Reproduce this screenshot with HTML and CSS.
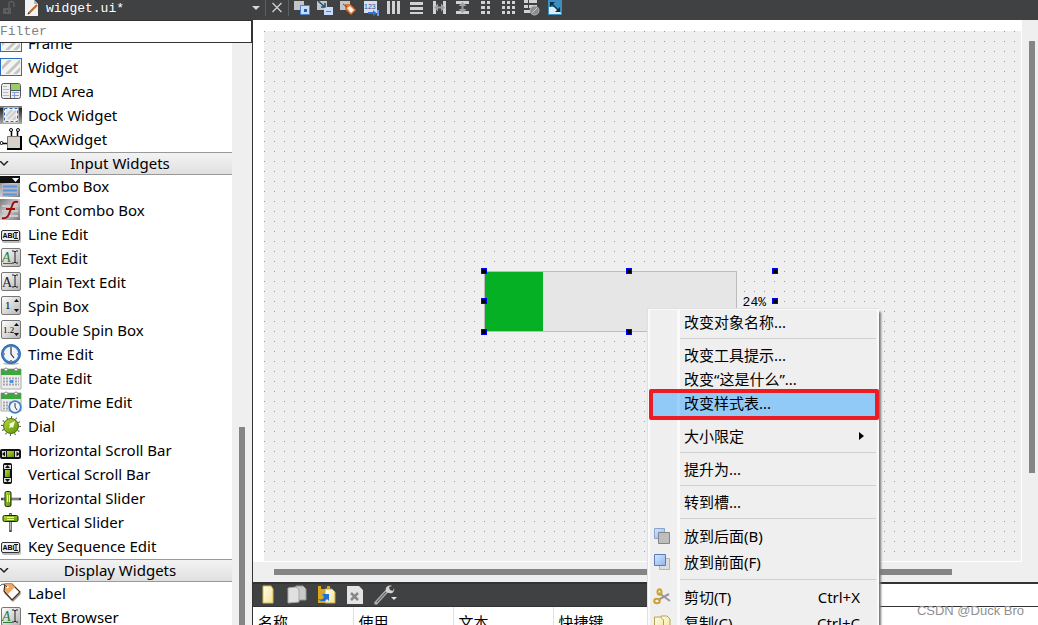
FILE: index.html
```html
<!DOCTYPE html>
<html lang="zh-CN">
<head>
  <meta charset="UTF-8">
  <meta name="viewport" content="width=device-width, initial-scale=1.0">
  <title>widget.ui - Designer</title>
  <link rel="stylesheet" href="styles.css">
</head>
<body>
  <!-- shared gradients and icons -->
  <svg class="defs" width="0" height="0" aria-hidden="true">
    <defs>
      <linearGradient id="grey" x1="0" y1="0" x2="1" y2="1"><stop offset="0" stop-color="#fff"/><stop offset="1" stop-color="#b4b4b4"/></linearGradient>
      <linearGradient id="dark" x1="0" y1="0" x2="0" y2="1"><stop offset="0" stop-color="#111"/><stop offset="1" stop-color="#aaa"/></linearGradient>
      <linearGradient id="steel" x1="0" y1="0" x2="1" y2="1"><stop offset="0" stop-color="#777"/><stop offset=".5" stop-color="#ccc"/><stop offset="1" stop-color="#777"/></linearGradient>
      <linearGradient id="green" x1="0" y1="0" x2="1" y2="1"><stop offset="0" stop-color="#b4dc3c"/><stop offset="1" stop-color="#5f8f08"/></linearGradient>
      <linearGradient id="sky" x1="0" y1="0" x2="1" y2="1"><stop offset="0" stop-color="#d4e6ff"/><stop offset="1" stop-color="#8fb6ee"/></linearGradient>
      <linearGradient id="paper" x1="0" y1="0" x2="1" y2="1"><stop offset="0" stop-color="#fffef0"/><stop offset="1" stop-color="#f3e391"/></linearGradient>
      <symbol id="i-frame" viewBox="0 0 22 24">
        <rect x=".5" y="2.5" width="21" height="17" fill="#f4f4f2" stroke="#2a6cc0"/>
        <path d="M2 10l6-6h4L2 14zM5 18L19 4h1v3L9 18zM13 18l7-7v4l-3 3z" fill="#c4c4c2"/>
      </symbol>
      <symbol id="i-abi" viewBox="0 0 22 24">
        <rect x="2" y="8" width="19" height="12" rx="2" fill="#bbb"/>
        <rect x="1.500" y="7.500" width="18" height="10" rx="1.500" fill="#eee" stroke="#333"/>
        <text x="2.500" y="15" class="abi">ABI</text>
        <path d="M14 9.500h4M14 15.500h4M16 9v7" stroke="#111"/>
      </symbol>
      <symbol id="i-text" viewBox="0 0 22 24">
        <rect x="1.500" y="1.500" width="19" height="18" rx="1.500" fill="url(#grey)" stroke="#777"/>
        <text x="2" y="15" class="ai ai-green">A</text>
        <path d="M3 16.500h9" stroke="#2b7c34"/>
        <path d="M12 4h2l1 1 1-1h2M12 16h2l1-1 1 1h2M15 5v10" stroke="#222" fill="none"/>
      </symbol>
    </defs>
  </svg>

  <header class="topbar">
    <svg class="lock" width="14" height="18" viewBox="0 0 14 18"><path d="M2 8h8v6H2z" fill="#5c5d5e"/><path d="M8 8V4a2.500 2.500 0 0 1 5 0v3" fill="none" stroke="#5c5d5e" stroke-width="1.500"/><path d="M5.500 10h1v2h-1z" fill="#333"/></svg>
    <svg width="16" height="18" viewBox="0 0 16 18"><path d="M1 0h9l4 4v12H1z" fill="#f2f2f2"/><path d="M10 0v4h4z" fill="#b9b9b9"/><path d="M5 13l8-8" stroke="#bf6a28" stroke-width="2.200"/><path d="M3.500 14.500l2.500-.8-1.600-1.600z" fill="#333"/></svg>
    <select class="doc" aria-label="Open documents"><option>widget.ui*</option></select>
    <svg class="drop" width="8" height="18" viewBox="0 0 8 18"><path d="M0 6h8L4 10z" fill="#d8d8d8"/></svg>
    <button class="close" aria-label="Close"><svg width="22" height="18" viewBox="0 0 22 18"><path d="M6.500 4l9 9M15.500 4l-9 9" stroke="#d0d0d0" stroke-width="1.300"/></svg></button>
    <nav class="tools">
      <button aria-label="Edit Widgets"><svg width="16" height="16"><path d="M0 1h10v9H0z" fill="#c5c5c5"/><path d="M6.500 5.500h9v9h-9z" fill="#c7dcfa" stroke="#4f7fcf"/><path d="M10 9h3v3h-3z" fill="#1f5dbb"/></svg></button>
      <button aria-label="Edit Signals"><svg width="16" height="16"><path d="M0 1h10v9H0z" fill="#c5c5c5"/><path d="M7 7h9v8H7z" fill="#c7dcfa"/><path d="M9 11.500h5" stroke="#4f7fcf"/><path d="M1 1l7 6M8 3v4H4" fill="none" stroke="#244f78" stroke-width="1.500"/></svg></button>
      <button aria-label="Edit Buddies"><svg width="16" height="16"><path d="M0 1h10v9H0z" fill="#c5c5c5"/><path d="M5 4h5l6 6-5 5-6-6z" fill="#e8712e"/><path d="M7 8l3-2 4 4-3 3z" fill="#fff4e8"/><path d="M3 4l4 3" stroke="#7d3f24"/></svg></button>
      <button aria-label="Edit Tab Order"><svg width="16" height="16"><path d="M1 1h13v12H1z" fill="#d7dfea"/><text x="1" y="9" class="num">123</text><path d="M5 12h5v-2l4 3.500-4 2.500v-2H5z" fill="#3272cf"/><path d="M15 10v6" stroke="#5b9bf0" stroke-width="2"/></svg></button>
      <button aria-label="Lay Out Horizontally"><svg width="16" height="16"><path d="M1 1h3v13H1zM6 1h3v13H6zM11 1h3v13h-3z" fill="#d2d2d2"/></svg></button>
      <button aria-label="Lay Out Vertically"><svg width="16" height="16"><path d="M1 2h13v3H1zM1 7h13v3H1zM1 12h13v2H1z" fill="#d2d2d2"/></svg></button>
      <button aria-label="Horizontal Splitter"><svg width="16" height="16"><path d="M1 1h3v13H1zM11 1h3v13h-3z" fill="#d2d2d2"/><path d="M2 7.500l4-4v3h3v-3l4 4-4 4v-3H6v3z" fill="#a0a0a0"/></svg></button>
      <button aria-label="Vertical Splitter"><svg width="16" height="16"><path d="M1 1h13v3H1zM1 11h13v3H1z" fill="#d2d2d2"/><path d="M7.500 2l4 4h-3v3h3l-4 4-4-4h3V6h-3z" fill="#a0a0a0"/></svg></button>
      <button aria-label="Form Layout"><svg width="16" height="16"><path d="M3 1h4v3H3zM9 1h3v3H9zM3 6h4v3H3zM9 6h3v3H9zM3 11h4v3H3zM9 11h3v3H9z" fill="#d2d2d2"/></svg></button>
      <button aria-label="Grid Layout"><svg width="16" height="16"><path d="M1 1h3v3H1zM6 1h3v3H6zM11 1h3v3h-3zM1 6h3v3H1zM6 6h3v3H6zM11 6h3v3h-3zM1 11h3v3H1zM6 11h3v3H6zM11 11h3v3h-3z" fill="#d2d2d2"/></svg></button>
      <button aria-label="Break Layout"><svg width="16" height="16"><path d="M0 0h4v3H0zM5 0h8v3H5zM0 5h4v3H0zM5 5h8v3H5zM0 10h6v3H0z" fill="#d2d2d2"/><circle cx="10.500" cy="10.500" r="4.500" fill="#8c8c8c" stroke="#b5b5b5"/><path d="M8 13l5-5" stroke="#ccc"/></svg></button>
      <button aria-label="Adjust Size"><svg width="16" height="16"><path d="M1 0h14v15H1z" fill="#3c8ec0"/><path d="M2 7h6l6 6v1H2z" fill="#dcecf5"/><path d="M4 3l8 8" stroke="#06344e" stroke-width="1.500"/><path d="M3 2h5L3 7zM13 12H8l5-5z" fill="#06344e"/></svg></button>
    </nav>
  </header>

  <main class="designer">
    <aside class="widgetbox">
      <input class="filter" type="text" placeholder="Filter" aria-label="Filter">
      <div class="box-scroll">
        <div class="box-list">
          <ul class="widgets">
            <li><svg class="icon"><use href="#i-frame"/></svg>Frame</li>
            <li><svg class="icon"><use href="#i-frame"/></svg>Widget</li>
            <li><svg class="icon" viewBox="0 0 22 24"><rect x="1.500" y="3.500" width="19" height="15" rx="2" fill="#eee" stroke="#555"/><path d="M11 4h9v6h-9z" fill="#9ccb6a"/><path d="M10.500 4v14M11 10.500h9" stroke="#555"/><path d="M3 6.500h4M3 9.500h6M3 12.500h5M3 15.500h6" stroke="#bbb"/><path d="M12 12.500h7M12 15.500h7M14.500 12v6" stroke="#7fa2df"/></svg>MDI Area</li>
            <li><svg class="icon" viewBox="0 0 22 24"><path d="M0 2h22v18H0z" fill="url(#dark)"/><path d="M0 2h22v2H0z" fill="#777"/><rect x="4.500" y="4.500" width="13" height="13" fill="#e6e6e6" stroke="#fff" stroke-width="2"/><rect x="4.500" y="4.500" width="13" height="13" fill="none" stroke="#2a6cc0" stroke-dasharray="3 2"/><path d="M6 12l6-6M8 15l8-8M13 16l3-3" stroke="#c8c8c8" stroke-width="1.500"/></svg>Dock Widget</li>
            <li><svg class="icon" viewBox="0 0 22 24"><path d="M11.500 3v6M17.500 3v6M3 15.500h5" stroke="#000" stroke-width="1.500"/><circle cx="11" cy="2" r="1.500" fill="#fff" stroke="#000"/><circle cx="18" cy="2" r="1.500" fill="#fff" stroke="#000"/><circle cx="1.500" cy="15" r="1.500" fill="#fff" stroke="#000"/><path d="M7 8h14v13H7z" fill="#d5d1ca"/><path d="M7.500 21V8.500H21" stroke="#777" fill="none"/><path d="M7 21h14V8" fill="none" stroke="#000" stroke-width="2"/></svg>QAxWidget</li>
          </ul>
          <h2 class="group"><svg class="chev" width="10" height="6"><path d="M1 0l4 4 4-4" fill="none" stroke="#222" stroke-width="1.500"/></svg>Input Widgets</h2>
          <ul class="widgets">
            <li><svg class="icon" viewBox="0 0 22 24"><path d="M0 1h20v21H0z" fill="url(#steel)"/><path d="M0 1h20v7H0z" fill="#111"/><path d="M12 3h7l-3.500 4z" fill="#fff"/><path d="M2 9h16v12H2z" fill="#b4b8be"/><path d="M3 11.500h14M3 15.500h14M3 19.500h14" stroke="#5b93d8" stroke-width="2"/></svg>Combo Box</li>
            <li><svg class="icon" viewBox="0 0 22 24"><path d="M0 0h20v21H0z" fill="url(#steel)"/><path d="M2 7h16M2 12h16M2 17h16" stroke="#ccc" stroke-width="2"/><path d="M18 3c-3-1-5 0-6 4l-3 8c-1 3-4 5-7 4M6 10h9" stroke="#a00d0d" stroke-width="2" fill="none"/></svg>Font Combo Box</li>
            <li><svg class="icon"><use href="#i-abi"/></svg>Line Edit</li>
            <li><svg class="icon"><use href="#i-text"/></svg>Text Edit</li>
            <li><svg class="icon" viewBox="0 0 22 24"><rect x="1.500" y="1.500" width="19" height="18" rx="1.500" fill="url(#grey)" stroke="#777"/><text x="2" y="16" class="ai">A</text><path d="M12 4h2l1 1 1-1h2M12 16h2l1-1 1 1h2M15 5v10" stroke="#222" fill="none"/></svg>Plain Text Edit</li>
            <li><svg class="icon" viewBox="0 0 22 24"><rect x="1.500" y="1.500" width="19" height="18" rx="1.500" fill="url(#grey)" stroke="#777"/><text x="5" y="14" class="digit">1</text><path d="M14 7h5l-2.500-3zM14 14h5l-2.500 3z" fill="#111"/></svg>Spin Box</li>
            <li><svg class="icon" viewBox="0 0 22 24"><rect x="1.500" y="1.500" width="19" height="18" rx="1.500" fill="url(#grey)" stroke="#777"/><text x="3" y="14" class="digit small">1.2</text><path d="M14 7h5l-2.500-3zM14 14h5l-2.500 3z" fill="#111"/></svg>Double Spin Box</li>
            <li><svg class="icon" viewBox="0 0 22 24"><ellipse cx="11" cy="20.500" rx="8" ry="1.500" fill="#bbb"/><circle cx="11" cy="11" r="8.500" fill="#f2f6fb" stroke="#3f7fc8" stroke-width="2.500"/><circle cx="11" cy="11" r="9.500" fill="none" stroke="#20508e" stroke-width=".7"/><path d="M11 5v6l3 4M11 4v1M4 11h1M17 11h1M11 17v1" fill="none" stroke="#333" stroke-width="1.200"/></svg>Time Edit</li>
            <li><svg class="icon" viewBox="0 0 22 24"><path d="M1 2h20v20H1z" fill="#ededed" stroke="#aaa"/><path d="M1 2h20v6H1z" fill="#3da63d"/><path d="M3 11.500h16M3 14.500h16M3 17.500h16" stroke="#a5a5b0" stroke-width="2" stroke-dasharray="2 1"/><path d="M10 13h3v3h-3z" fill="#4d8fe0"/><circle cx="6" cy="2.500" r="1.500" fill="#fff" stroke="#888"/><circle cx="16" cy="2.500" r="1.500" fill="#fff" stroke="#888"/></svg>Date Edit</li>
            <li><svg class="icon" viewBox="0 0 22 24"><path d="M1 2h20v18H1z" fill="#ededed" stroke="#aaa"/><path d="M1 2h20v6H1z" fill="#3da63d"/><path d="M3 11.500h8M3 14.500h6M3 17.500h6" stroke="#a5a5b0" stroke-width="2" stroke-dasharray="2 1"/><circle cx="6" cy="2.500" r="1.500" fill="#fff" stroke="#888"/><circle cx="16" cy="2.500" r="1.500" fill="#fff" stroke="#888"/><circle cx="15" cy="16" r="5.800" fill="#f2f6fb" stroke="#3f7fc8" stroke-width="1.800"/><path d="M15 12v4l2 3" fill="none" stroke="#333"/></svg>Date/Time Edit</li>
            <li><svg class="icon" viewBox="0 0 22 24"><circle cx="11" cy="11" r="9" fill="none" stroke="#555" stroke-width="2" stroke-dasharray="1 3.700"/><circle cx="11" cy="11" r="7.500" fill="url(#green)" stroke="#48700a"/><path d="M15 6l-6 3 1 1-1 3 3-1 1 1z" fill="#f8ffe0"/></svg>Dial</li>
            <li><svg class="icon" viewBox="0 0 22 24"><rect x="0" y="10" width="21" height="10" rx="2" fill="#111"/><path d="M2 12h17v6H2z" fill="#ddd"/><path d="M6 11h9v8H6z" fill="#111"/><path d="M7 12h7v6H7z" fill="url(#green)"/><path d="M5 12.500v5L2 15zM16.500 12.500v5l3-2.500z" fill="#111"/></svg>Horizontal Scroll Bar</li>
            <li><svg class="icon" viewBox="0 0 22 24"><rect x="3" y="0" width="9" height="21" rx="2" fill="#111"/><path d="M4 2h7v17H4z" fill="#ddd"/><path d="M4 6h7v9H4z" fill="#111"/><path d="M5 7h5v7H5z" fill="url(#green)"/><path d="M5 5h5L7.500 2zM5 16h5l-2.500 3z" fill="#111"/></svg>Vertical Scroll Bar</li>
            <li><svg class="icon" viewBox="0 0 22 24"><path d="M1 12h20" stroke="#444" stroke-width="2.500"/><path d="M3 12h16" stroke="#bbb"/><rect x="5" y="4.500" width="6" height="15" rx="1.500" fill="url(#green)" stroke="#1c2604"/><path d="M7.500 8v7M9.500 8v7" stroke="#e8ffa0"/></svg>Horizontal Slider</li>
            <li><svg class="icon" viewBox="0 0 22 24"><path d="M10.500 2v19" stroke="#444" stroke-width="2.500"/><path d="M10.500 3v16" stroke="#bbb"/><rect x="3" y="4.500" width="15" height="6" rx="1.500" fill="url(#green)" stroke="#1c2604"/><path d="M7 6.500h7M7 8.500h7" stroke="#e8ffa0"/></svg>Vertical Slider</li>
            <li><svg class="icon"><use href="#i-abi"/></svg>Key Sequence Edit</li>
          </ul>
          <h2 class="group"><svg class="chev" width="10" height="6"><path d="M1 0l4 4 4-4" fill="none" stroke="#222" stroke-width="1.500"/></svg>Display Widgets</h2>
          <ul class="widgets">
            <li><svg class="icon" viewBox="0 0 22 24"><path d="M6 3h7l8 9-8 8-9-9z" fill="#999"/><path d="M5 2h7l8 8-8 8-8-9z" fill="#fff" stroke="#4a2c14" stroke-width="1.200"/><path d="M5 2h7l3 3-7 7-3-3z" fill="#f0a860"/><circle cx="7.500" cy="5" r="1.200" fill="#fff"/><path d="M7 5C3 0 1 3 0 4" fill="none" stroke="#333"/></svg>Label</li>
            <li><svg class="icon"><use href="#i-text"/></svg>Text Browser</li>
          </ul>
        </div>
        <div class="box-bar"><div class="box-thumb"></div></div>
      </div>
    </aside>

    <section class="work">
      <div class="view">
        <div class="canvas">
          <div class="form">
            <div class="selected">
              <progress class="bar" value="23" max="100" id="progressBar"></progress>
              <label class="percent" for="progressBar">24%</label>
              <i class="grip nw"></i><i class="grip n"></i><i class="grip ne"></i>
              <i class="grip w"></i><i class="grip e"></i>
              <i class="grip sw"></i><i class="grip s"></i>
            </div>
          </div>
        </div>
        <div class="vbar"><div class="vthumb"></div></div>
      </div>
      <div class="hbar"><div class="hthumb"></div></div>

      <div class="actions">
        <div class="actionbar">
          <button aria-label="New"><svg width="20" height="20"><path d="M5 1h8l2 3v14H5z" fill="url(#paper)" stroke="#d8ba50"/></svg></button>
          <button aria-label="Copy"><svg width="20" height="20"><path d="M9 1h7l3 3v11H9z" fill="#c9c9c9" stroke="#999"/><path d="M1 3l8-1 3 3v12l-11 1z" fill="#e0e0e0" stroke="#aaa"/></svg></button>
          <button aria-label="Paste"><svg width="20" height="20"><path d="M2 1h12v17H2z" fill="#dba820"/><path d="M5 0h6v4H5z" fill="#444"/><path d="M9 4h7l3 3v11H9z" fill="url(#paper)" stroke="#c9a244"/><path d="M2 14c4 1 5 0 6-2L6 9h7v7l-2-2c-2 3-6 3-9 0z" fill="#1d71db"/></svg></button>
          <button aria-label="Delete"><svg width="20" height="20"><path d="M2 1h12l4 4v14H2z" fill="#e4e4e4"/><path d="M6 8l7 7M13 8l-7 7" stroke="#888" stroke-width="2.500"/></svg></button>
          <button aria-label="Configure"><svg width="26" height="20"><path d="M2 18L12 7" stroke="#aaa" stroke-width="3.500" stroke-linecap="round"/><path d="M3 17L12 7" stroke="#505152"/><path d="M18 1l-3 1 1 3 3 1 1-3c1 4-2 6-5 5-3 0-4-3-3-5s3-3 6-2z" fill="#d4d4d4"/><path d="M17 12h6l-3 3z" fill="#e6e6e6"/></svg></button>
        </div>
        <input class="action-filter" type="text" aria-label="Filter actions">
      </div>
      <table class="action-table">
        <thead><tr><th>名称</th><th>使用</th><th>文本</th><th>快捷键</th><th></th></tr></thead>
      </table>
    </section>

    <div class="menu" role="menu">
      <button class="item">改变对象名称...</button>
      <hr>
      <button class="item">改变工具提示...</button>
      <button class="item">改变“这是什么”...</button>
      <button class="item active">改变样式表...</button>
      <hr>
      <button class="item">大小限定<svg class="arrow" width="5" height="8"><path d="M0 0l5 4-5 4z"/></svg></button>
      <hr>
      <button class="item">提升为...</button>
      <hr>
      <button class="item">转到槽...</button>
      <hr>
      <button class="item tall"><svg class="glyph" width="18" height="18"><path d="M1.500 1.500h10v10h-10z" fill="url(#sky)" stroke="#8ba3cc"/><path d="M5.500 5.500h11v11h-11z" fill="#bebebe" stroke="#858585"/></svg>放到后面(B)</button>
      <button class="item tall"><svg class="glyph" width="18" height="18"><path d="M6.500 5.500h10v11h-10z" fill="#ddd" stroke="#b5b5b5"/><path d="M1.500 1.500h11v11h-11z" fill="url(#sky)" stroke="#5c7cae"/></svg>放到前面(F)</button>
      <hr>
      <button class="item tall"><svg class="glyph" width="18" height="18"><path d="M6 5l11 8M5 12l11-6" stroke="#999" stroke-width="2"/><ellipse cx="6.500" cy="4" rx="2" ry="2.800" fill="none" stroke="#d0a030" stroke-width="2"/><ellipse cx="4" cy="13" rx="2.800" ry="2.200" fill="none" stroke="#d0a030" stroke-width="2"/></svg>剪切(T)<span class="key">Ctrl+X</span></button>
      <button class="item tall"><svg class="glyph" width="18" height="18"><path d="M8 2h6l3 3v10H8z" fill="url(#paper)" stroke="#b9a24f"/><path d="M1.500 3h6l3 3v11h-9z" fill="url(#paper)" stroke="#b9a24f"/></svg>复制(C)<span class="key">Ctrl+C</span></button>
    </div>
    <span class="mark">CSDN @Duck Bro</span>
  </main>
</body>
</html>
```
FILE: styles.css
```css
*{margin: 0; padding: 0; box-sizing: border-box;}
body{
  height: 100vh;
  display: flex; flex-direction: column;
  overflow: hidden;
  background: #fff; color: #000;
  font: 15px/22px "Noto Sans", "Noto Sans CJK SC", sans-serif;
}
button, input, select{font: inherit; color: inherit; border: 0; background: none; outline: 0;}
button{display: flex; align-items: center;}
ul{list-style: none;}
.defs{position: absolute;}

/* top toolbar */
.topbar{
  flex: none; height: 20px;
  display: flex; align-items: flex-start;
  background: #404142;
}
.lock{margin: 0 9px 0 1px;}
.doc{
  appearance: none;
  width: 212px; height: 18px; padding-left: 6px;
  color: #fff;
  font: 13px/18px "Liberation Mono", monospace;
}
.drop{margin-right: 5px;}
.close{border: solid #5e5f60; border-width: 0 1px; height: 16px;}
.tools{display: flex; gap: 7px; padding-left: 5px;}
.num{font: 7px "Liberation Sans", sans-serif; fill: #22569c;}

.designer{flex: 1; min-height: 0; display: flex; position: relative;}

/* widget box */
.widgetbox{
  flex: none; width: 253px;
  display: flex; flex-direction: column;
  border-right: 1px solid #333;
}
.filter{
  width: 100%; height: 23px;
  border: solid #333; border-width: 1px 1px 1px 0;
  font: 13px/20px "Liberation Mono", monospace;
}
.filter::placeholder{color: #808080;}
.box-scroll{flex: 1; min-height: 0; display: flex; overflow: hidden;}
/* list is scrolled down so the Frame row is cut */
.box-list{flex: 1; margin-top: -11px;}
.widgets li{display: flex; gap: 6px; height: 24px; white-space: nowrap;}
.icon{width: 22px; height: 24px; flex: none;}
.abi{font: bold 7px "Liberation Sans", sans-serif;}
.ai{font: 14px "Liberation Serif", serif; fill: #222;}
.ai-green{font-style: italic; fill: #2b7c34;}
.digit{font: 11px "Liberation Serif", serif;}
.small{font-size: 9px;}
.group{
  position: relative;
  height: 23px; padding-left: 8px;
  border: solid #999; border-width: 1px 0;
  background: linear-gradient(#f3f3f3, #e0e0e0);
  font-size: 15px; line-height: 20px; font-weight: normal;
  text-align: center;
}
.chev{position: absolute; left: -1px; top: 8px;}
.box-bar{width: 20px; background: #efefef; display: flex; justify-content: center; align-items: flex-end;}
.box-thumb{width: 6px; height: 34%; background: #858585;}

/* form editor */
.work{flex: 1; min-width: 0; display: flex; flex-direction: column;}
.view{flex: 1; min-height: 0; display: flex;}
.canvas{flex: 1; display: flex; padding: 11px 1px 1px 11px; background: #fff;}
.form{
  flex: 1; position: relative;
  background:
    linear-gradient(90deg, transparent 1px, #efefef 1px) 0 0 / 10px 10px,
    linear-gradient(#999 1px, #efefef 1px) 0 0 / 10px 10px;
}
.selected{position: absolute; left: 220px; top: 240px; width: 291px; height: 61px;}
.bar{
  appearance: none; display: block;
  width: 253px; height: 61px;
  border: 1px solid #bcbcbc;
}
.bar::-webkit-progress-bar{background: #e6e6e6;}
.bar::-webkit-progress-value{background: #06b025;}
.percent{position: absolute; right: 9px; top: 22px; font: 13px/20px "Liberation Mono", monospace;}
.grip{position: absolute; width: 6px; height: 6px; margin: -3px; background: #000; border: 1px solid #00f;}
.nw{left: 0; top: 0;}
.n{left: 145px; top: 0;}
.ne{left: 100%; top: 0;}
.w{left: 0; top: 30px;}
.e{left: 100%; top: 30px;}
.sw{left: 0; top: 100%;}
.s{left: 145px; top: 100%;}
.vbar{width: 16px; padding: 21px 3px 0 7px; background: #efefef;}
.vthumb{height: 83%; background: #858585;}
.hbar{flex: none; height: 20px; padding: 7px 86px 0 21px; background: #efefef;}
.hthumb{height: 6px; background: #858585;}

/* action editor */
.actions{flex: none; display: flex; height: 25px; border: solid #333; border-width: 2px 0 1px;}
.actionbar{flex: 1; display: flex; gap: 9px; padding-left: 5px; background: #404142;}
.action-filter{flex: 1; background: #fff;}
.action-table{flex: none; display: block; height: 18px; border-collapse: collapse; overflow: hidden;}
.action-table th{
  width: 100px; min-width: 100px; padding: 4px 5px 0;
  border-right: 1px solid #e0e0e0;
  text-align: left; font-weight: normal;
}

/* context menu */
.menu{
  position: absolute; left: 647px; top: 288px;
  width: 232px; height: 330px;
  padding: 3px 2px 0;
  border-left: 1px solid #e0e0e0;
  background: linear-gradient(90deg, #efefef 29px, #fafafa 29px, #fafafa 32px, #efefef 32px);
  box-shadow: inset 0 1px #e0e0e0, inset 2px 2px #fafafa, inset -2px 0 #fafafa, 2px 4px 2px #777;
}
.menu hr{height: 1px; margin: 3px 1px 5px 30px; border: 0; background: #d0d0d0;}
.item{position: relative; width: 100%; height: 24px; padding: 0 17px 2px 34px; white-space: nowrap;}
.tall{height: 26px;}
.active{background: linear-gradient(90deg, #91c9f7 27px, #9ccff9 27px, #9ccff9 30px, #91c9f7 30px);}
.active::after{
  content: "";
  position: absolute; inset: -3px -2px -4px -1px;
  border: 4px solid #ed1c24; border-radius: 2px;
}
.glyph{position: absolute; left: 3px; top: 3px;}
.arrow, .key{margin-left: auto;}
.arrow{margin-right: -4px;}
.mark{
  position: absolute; right: 14px; bottom: 4px;
  color: #909090;
  font: 13px/20px "Liberation Sans", sans-serif;
}
```
